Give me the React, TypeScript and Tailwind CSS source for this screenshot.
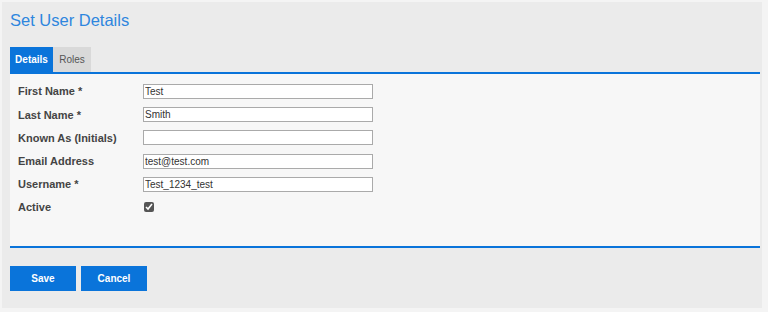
import { useState } from "react";

const FIELDS = [
  { label: "First Name *", value: "Test" },
  { label: "Last Name *", value: "Smith" },
  { label: "Known As (Initials)", value: "" },
  { label: "Email Address", value: "test@test.com" },
  { label: "Username *", value: "Test_1234_test" },
];

export default function App() {
  const [active, setActive] = useState(true);

  return (
    <div className="w-[768px] h-[312px] bg-[#f4f4f4] p-[2px] font-['Liberation_Sans',Arial,sans-serif]">
      <div className="w-[760px] h-[306px] bg-[#ebebeb] pl-2 pt-[8px]">
        <h1 className="text-[16.5px] leading-[20px] text-[#2e86de]">Set User Details</h1>

        <div className="mt-[17px] w-[750px]">
          <div className="flex">
            <div className="h-[25px] w-[43px] flex items-center justify-center bg-[#0a74da] text-white text-[10px] font-bold">
              Details
            </div>
            <div className="h-[25px] w-[38px] flex items-center justify-center bg-[#d9d9d9] text-[#555] text-[10px]">
              Roles
            </div>
          </div>
          <div className="border-t-2 border-b-2 border-[#0a74da] bg-[#f7f7f7] h-[176px] pt-[6px] pl-[8px]">
            {FIELDS.map((f) => (
              <div key={f.label} className="flex items-center h-[23.2px]">
                <label className="w-[125px] text-[11px] font-bold text-[#444]">{f.label}</label>
                <input
                  defaultValue={f.value}
                  className="w-[230px] h-[15px] border border-[#aaa] bg-white text-[10px] text-[#333] px-[1px] leading-[13px] outline-none"
                />
              </div>
            ))}
            <div className="flex items-center h-[23px]">
              <label className="w-[125px] text-[11px] font-bold text-[#444]">Active</label>
              <input
                type="checkbox"
                checked={active}
                onChange={(e) => setActive(e.target.checked)}
                className="w-[10px] h-[10px] ml-[1px] accent-[#555]"
              />
            </div>
          </div>
        </div>

        <div className="flex gap-[5px] mt-[18px]">
          <button className="w-[66px] h-[25px] bg-[#0a74da] text-white text-[10px] font-bold">Save</button>
          <button className="w-[66px] h-[25px] bg-[#0a74da] text-white text-[10px] font-bold">Cancel</button>
        </div>
      </div>
    </div>
  );
}
